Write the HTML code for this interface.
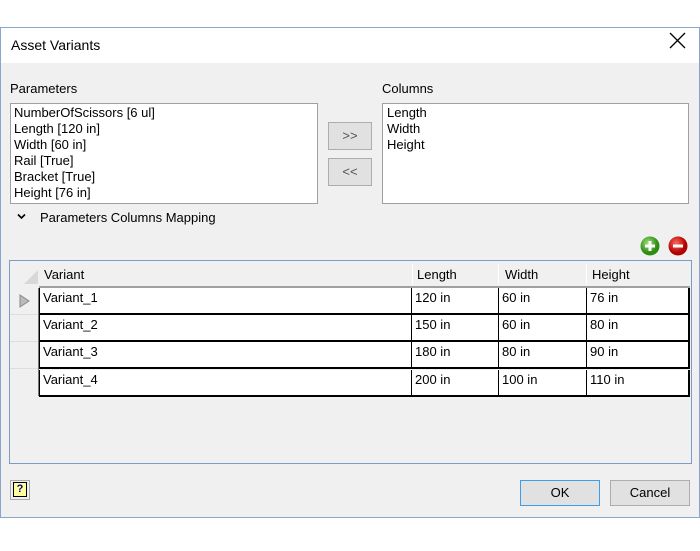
<!DOCTYPE html>
<html><head><style>
*{margin:0;padding:0;box-sizing:border-box}
body{width:700px;height:551px;background:#fff;position:relative;font-family:"Liberation Sans",sans-serif;font-size:13px;color:#000;overflow:hidden}
.a{position:absolute}
.dlg{left:0;top:27px;width:700px;height:491px;background:#f0f0f0;border:1px solid #8aa6cf}
.title{left:1px;top:28px;width:698px;height:35px;background:#fff}
.box{background:#fff;border:1px solid #a0a0a0}
.btn{background:#e1e1e1;border:1px solid #adadad;text-align:center}
.t{white-space:nowrap}
.cell{position:absolute;height:27px;background:#fff;border-left:1px solid #000;border-bottom:2px solid #000;padding:2px 0 0 3px}
</style></head><body>
<div class="a dlg"></div>
<div class="a title"></div>
<div class="a t" style="left:11px;top:37px;font-size:14px">Asset Variants</div>
<svg class="a" style="left:669px;top:32px" width="18" height="18"><path d="M1 1L16 16M16 1L1 16" stroke="#000" stroke-width="1.3"/></svg>
<div class="a t" style="left:10px;top:81px">Parameters</div>
<div class="a box" style="left:10px;top:103px;width:308px;height:101px"></div>
<div class="a t" style="left:14px;top:105px;line-height:16px">NumberOfScissors [6 ul]<br>Length [120 in]<br>Width [60 in]<br>Rail [True]<br>Bracket [True]<br>Height [76 in]</div>
<div class="a btn" style="left:328px;top:122px;width:44px;height:28px;line-height:26px;color:#555">&gt;&gt;</div>
<div class="a btn" style="left:328px;top:158px;width:44px;height:28px;line-height:26px;color:#555">&lt;&lt;</div>
<div class="a t" style="left:382px;top:81px">Columns</div>
<div class="a box" style="left:382px;top:103px;width:307px;height:101px"></div>
<div class="a t" style="left:387px;top:105px;line-height:16px">Length<br>Width<br>Height</div>
<svg class="a" style="left:17px;top:213px" width="10" height="8"><path d="M1 1.5L4.5 5L8 1.5" stroke="#000" stroke-width="1.6" fill="none"/></svg>
<div class="a t" style="left:40px;top:210px">Parameters Columns Mapping</div>
<svg class="a" style="left:640px;top:235px" width="50" height="22"><defs><radialGradient id="g" cx=".4" cy=".35"><stop offset="0" stop-color="#9fe07a"/><stop offset="1" stop-color="#2f8c12"/></radialGradient><radialGradient id="r" cx=".4" cy=".35"><stop offset="0" stop-color="#ff6a5a"/><stop offset="1" stop-color="#b00000"/></radialGradient></defs><circle cx="10" cy="11" r="9.5" fill="url(#g)"/><path d="M10 6v10M5 11h10" stroke="#fff" stroke-width="3"/><circle cx="38" cy="11" r="9.5" fill="url(#r)"/><path d="M33 11h10" stroke="#fff" stroke-width="3"/></svg>
<div class="a" style="left:9px;top:260px;width:683px;height:204px;border:1px solid #7a9cc6;background:#f0f0f0"></div>
<svg class="a" style="left:24px;top:270px" width="14" height="14"><path d="M14 0V14H0Z" fill="#d8d8d8"/></svg>
<div class="a t" style="left:44px;top:267px">Variant</div>
<div class="a t" style="left:417px;top:267px">Length</div>
<div class="a t" style="left:505px;top:267px">Width</div>
<div class="a t" style="left:592px;top:267px">Height</div>
<div class="a" style="left:412px;top:264px;width:1px;height:20px;background:#fff"></div>
<div class="a" style="left:498px;top:264px;width:1px;height:20px;background:#fff"></div>
<div class="a" style="left:586px;top:264px;width:1px;height:20px;background:#fff"></div>
<div class="a" style="left:39px;top:286px;width:651px;height:2px;background:#a0a0a0"></div>
<div class="a" style="left:10px;top:314px;width:28px;height:1px;background:#ddd"></div>
<div class="a" style="left:10px;top:341px;width:28px;height:1px;background:#ddd"></div>
<div class="a" style="left:10px;top:368px;width:28px;height:1px;background:#ddd"></div>
<svg class="a" style="left:19px;top:294px" width="12" height="14"><path d="M1 1L10 7L1 13Z" fill="#bbb" stroke="#888"/></svg>
<div class="a" style="left:38px;top:288px;width:1px;height:108px;background:#777"></div>

<div class="cell" style="left:39px;top:288px;width:373px">Variant_1</div>
<div class="cell" style="left:411px;top:288px;width:88px">120 in</div>
<div class="cell" style="left:498px;top:288px;width:89px">60 in</div>
<div class="cell" style="left:586px;top:288px;width:104px;border-right:2px solid #000">76 in</div>
<div class="cell" style="left:39px;top:315px;width:373px">Variant_2</div>
<div class="cell" style="left:411px;top:315px;width:88px">150 in</div>
<div class="cell" style="left:498px;top:315px;width:89px">60 in</div>
<div class="cell" style="left:586px;top:315px;width:104px;border-right:2px solid #000">80 in</div>
<div class="cell" style="left:39px;top:342px;width:373px">Variant_3</div>
<div class="cell" style="left:411px;top:342px;width:88px">180 in</div>
<div class="cell" style="left:498px;top:342px;width:89px">80 in</div>
<div class="cell" style="left:586px;top:342px;width:104px;border-right:2px solid #000">90 in</div>
<div class="cell" style="left:39px;top:370px;width:373px">Variant_4</div>
<div class="cell" style="left:411px;top:370px;width:88px">200 in</div>
<div class="cell" style="left:498px;top:370px;width:89px">100 in</div>
<div class="cell" style="left:586px;top:370px;width:104px;border-right:2px solid #000">110 in</div>

<div class="a" style="left:10px;top:480px;width:20px;height:20px;border:1px solid #aaa;background:#f0f0f0"></div>
<div class="a" style="left:13px;top:482px;width:14px;height:15px;background:#ffffa0;border:1.5px solid #000;font-size:11px;font-weight:bold;color:#00008b;text-align:center;line-height:12px">?</div>
<div class="a btn" style="left:520px;top:480px;width:80px;height:26px;line-height:24px;border-color:#3c9ee8">OK</div>
<div class="a btn" style="left:610px;top:480px;width:80px;height:26px;line-height:24px">Cancel</div>
</body></html>
